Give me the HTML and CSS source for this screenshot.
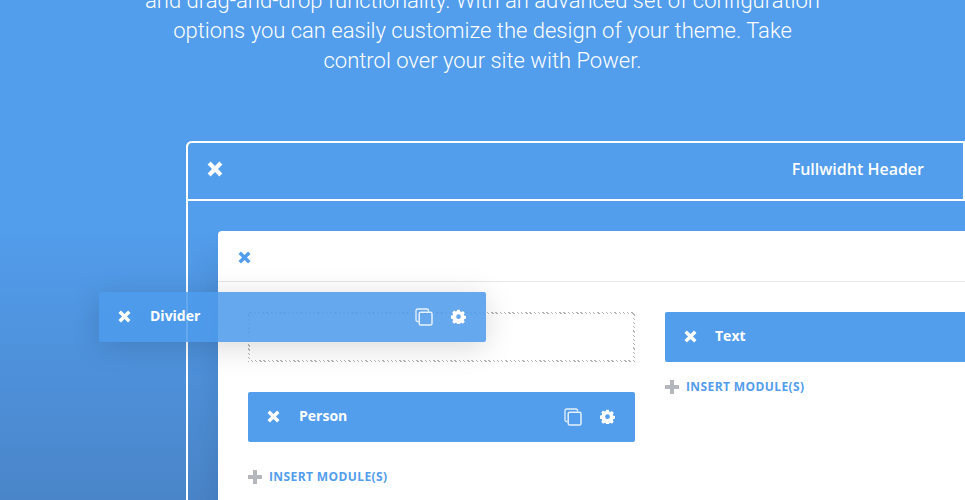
FILE: index.html
```html
<!DOCTYPE html>
<html lang="en">
<head>
    <meta charset="UTF-8">
    <meta name="viewport" content="width=device-width, initial-scale=1.0">
    <title>Page Builder</title>
    <link rel="stylesheet" href="styles.css">
</head>
<body>
    <svg class="icon-defs" width="0" height="0">
        <symbol id="icon-close" viewBox="0 0 16 16">
            <path d="M3.6.6 8 5 12.4.6l3 3L11 8l4.4 4.4-3 3L8 11l-4.4 4.4-3-3L5 8 .6 3.6z"/>
        </symbol>
        <symbol id="icon-plus" viewBox="0 0 14 14">
            <path d="M5 0h4v5h5v4H9v5H5V9H0V5h5z"/>
        </symbol>
        <symbol id="icon-copy" viewBox="0 0 18 18">
            <path fill="none" stroke="currentColor" stroke-width="1.3" d="M3.5 13.5H2.6a1.6 1.6 0 0 1-1.6-1.6V2.6A1.6 1.6 0 0 1 2.6 1h9.3a1.6 1.6 0 0 1 1.6 1.6v.9"/>
            <rect x="4.2" y="4.2" width="12.8" height="12.8" rx="1.6" fill="none" stroke="currentColor" stroke-width="1.5"/>
        </symbol>
        <symbol id="icon-gear" viewBox="0 0 16 16">
            <path fill-rule="evenodd" d="M6.6.8h2.8l.4 1.9 1.2.5 1.7-1 2 2-1 1.7.5 1.2 1.9.4v2.8l-1.9.4-.5 1.2 1 1.7-2 2-1.7-1-1.2.5-.4 1.9H6.6l-.4-1.9-1.2-.5-1.7 1-2-2 1-1.7-.5-1.2-1.9-.4V7l1.9-.4.5-1.2-1-1.7 2-2 1.7 1 1.2-.5zM8 5.7a2.5 2.5 0 1 0 0 5 2.5 2.5 0 0 0 0-5z"/>
        </symbol>
    </svg>

    <main class="hero">
        <p class="intro">and drag-and-drop functionality. With an advanced set of configuration options you can easily customize the design of your theme. Take control over your site with Power.</p>

        <section class="section-frame">
            <header class="section-header">
                <svg class="icon icon-lg"><use href="#icon-close"/></svg>
                <span class="section-title">Fullwidht Header</span>
            </header>

            <div class="row-card">
                <div class="row-bar">
                    <svg class="icon icon-sm"><use href="#icon-close"/></svg>
                </div>
                <div class="row-columns">
                    <div class="column">
                        <div class="drop-slot"></div>
                        <div class="module">
                            <svg class="icon"><use href="#icon-close"/></svg>
                            <span class="module-name">Person</span>
                            <span class="module-actions">
                                <svg class="icon-copy"><use href="#icon-copy"/></svg>
                                <svg class="icon-gear"><use href="#icon-gear"/></svg>
                            </span>
                        </div>
                        <a class="insert-link insert-link-low" href="#"><svg class="icon-plus"><use href="#icon-plus"/></svg>INSERT MODULE(S)</a>
                    </div>
                    <div class="column">
                        <div class="module">
                            <svg class="icon"><use href="#icon-close"/></svg>
                            <span class="module-name">Text</span>
                        </div>
                        <a class="insert-link" href="#"><svg class="icon-plus"><use href="#icon-plus"/></svg>INSERT MODULE(S)</a>
                    </div>
                </div>
            </div>
        </section>

        <div class="module module-dragging">
            <svg class="icon"><use href="#icon-close"/></svg>
            <span class="module-name">Divider</span>
            <span class="module-actions">
                <svg class="icon-copy"><use href="#icon-copy"/></svg>
                <svg class="icon-gear"><use href="#icon-gear"/></svg>
            </span>
        </div>
    </main>
</body>
</html>
```

FILE: styles.css
```css
* {
    box-sizing: border-box;
}
html, body {
    margin: 0;
    height: 100%;
}
body {
    font-family: "Open Sans", Arial, sans-serif;
    overflow: hidden;
}
.icon-defs {
    display: block;
    height: 0;
}
.hero {
    position: relative;
    height: 500px;
    overflow: hidden;
    background: linear-gradient(to bottom, #529dec 0, #529dec 230px, #4a85c9 500px);
}
.intro {
    width: 690px;
    margin: 0 auto;
    margin-top: -14px;
    color: #fff;
    font-family: Roboto, Arial, sans-serif;
    font-weight: 300;
    font-size: 22px;
    line-height: 30px;
    text-align: center;
}
.section-frame {
    margin: 65px 0 0 186px;
    height: 400px;
    border-left: 2px solid #fff;
    border-top-left-radius: 6px;
}
.section-header {
    display: flex;
    align-items: center;
    justify-content: space-between;
    width: 779px;
    height: 60px;
    margin-left: -2px;
    padding: 0 39px 0 19px;
    border: 2px solid #fff;
    border-top-left-radius: 6px;
    color: #fff;
}
.section-title {
    padding-bottom: 4px;
    font-size: 16px;
    font-weight: 600;
}
.icon {
    width: 13px;
    height: 13px;
    margin-bottom: 2px;
    fill: #fff;
    flex: none;
}
.icon-lg {
    width: 16px;
    height: 16px;
    margin-bottom: 4px;
}
.icon-sm {
    width: 13px;
    height: 13px;
    margin: 2px 0 0;
    fill: #529dec;
}
.row-card {
    margin: 30px 0 0 30px;
    width: 760px;
    height: 300px;
    background: #fff;
    border-radius: 4px 0 0 0;
    box-shadow: -6px 24px 30px rgba(0, 0, 0, .08);
}
.row-bar {
    display: flex;
    align-items: center;
    height: 51px;
    padding-left: 20px;
    border-bottom: 1px solid #e6e6e6;
}
.row-columns {
    display: flex;
    gap: 30px;
    padding: 30px 0 0 30px;
}
.column {
    flex: none;
    width: 387px;
}
.column + .column {
    width: 330px;
}
.drop-slot {
    height: 50px;
    margin-bottom: 30px;
    border: 2px solid transparent;
    border-image: repeating-linear-gradient(45deg, #b5b5b5 0, #b5b5b5 1px, #fff 1px, #fff 3px) 2;
}
.module {
    display: flex;
    align-items: center;
    height: 50px;
    padding: 0 20px 0 19px;
    border-radius: 2px;
    background: #529dec;
    color: #fff;
}
.module-name {
    margin-left: 19px;
    padding-bottom: 4px;
    font-size: 14px;
    font-weight: 700;
}
.column + .column .module-name {
    margin-left: 18px;
}
.module-actions {
    display: flex;
    align-items: center;
    gap: 18px;
    margin-left: auto;
}
.icon-copy {
    width: 18px;
    height: 18px;
    color: #fff;
    opacity: .85;
}
.icon-gear {
    width: 15px;
    height: 15px;
    margin-bottom: 1px;
    fill: #fff;
}
.insert-link {
    display: flex;
    align-items: center;
    gap: 7px;
    margin-top: 16px;
    font-size: 12px;
    font-weight: 700;
    line-height: 17px;
    letter-spacing: .4px;
    color: #529dec;
    text-decoration: none;
}
.insert-link-low {
    margin-top: 26px;
}
.icon-plus {
    width: 14px;
    height: 14px;
    fill: #b4b7bb;
    flex: none;
}
.module-dragging {
    position: absolute;
    left: 99px;
    top: 292px;
    width: 387px;
    background: rgba(78, 155, 236, .87);
    box-shadow: 0 5px 30px rgba(0, 0, 0, .15);
}
```
